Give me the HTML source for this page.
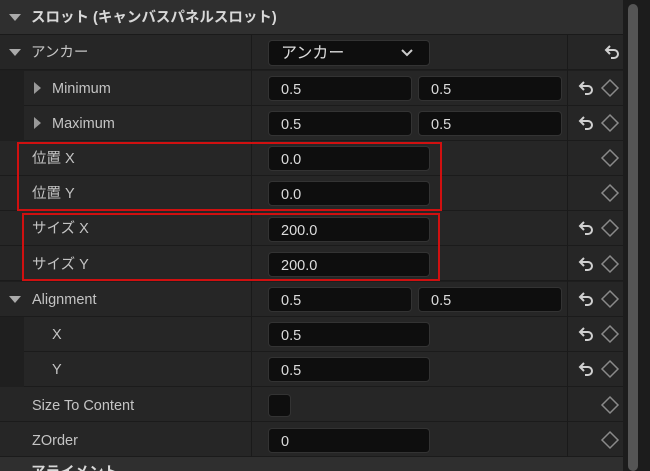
<!DOCTYPE html>
<html><head><meta charset="utf-8"><style>
*{margin:0;padding:0;box-sizing:border-box}
html,body{width:650px;height:471px;overflow:hidden}
body{background:#1e1e1e;font-family:"Liberation Sans","Noto Sans CJK JP",sans-serif;color:#c8c8c8;font-size:14px;position:relative}
.a{position:absolute}
.hdr{left:0;top:0;width:623px;height:35px;background:#2f2f2f;border-bottom:1px solid #1a1a1a}
.row{left:0;width:623px;height:35px;background:#262626;border-bottom:1px solid #1b1b1b}
.ind{left:0;width:24px;height:35px;background:#1f1f1f}
.lbl{font-size:14.5px;line-height:18px;color:#c4c4c4;white-space:nowrap}
.in{height:25px;background:#0e0e0e;border:1px solid #333;border-radius:4px;color:#ddd;font-size:14.5px;line-height:26px;padding:0 0 0 12px}
.vd{left:251px;width:1px;background:#1a1a1a;top:35px;height:422px}
.vd2{left:567px;width:1px;background:#1a1a1a;top:35px;height:422px}
.tri{width:0;height:0;border-left:6px solid transparent;border-right:6px solid transparent;border-top:7px solid #aaa}
.tr{width:0;height:0;border-top:6px solid transparent;border-bottom:6px solid transparent;border-left:7px solid #999}
.red{border:2px solid #d01010}
</style></head><body>
<div class="a hdr"></div>
<div class="a tri" style="left:9px;top:14px"></div>
<div class="a" style="left:31px;top:9px;font-size:14.5px;line-height:18px;font-weight:bold;color:#d8d8d8">スロット (キャンバスパネルスロット)</div>

<div class="a row" style="top:35px"></div>
<div class="a row" style="top:71px"></div><div class="a ind" style="top:71px"></div>
<div class="a row" style="top:106px"></div><div class="a ind" style="top:106px"></div>
<div class="a row" style="top:141px"></div>
<div class="a row" style="top:176px"></div>
<div class="a row" style="top:211px"></div>
<div class="a row" style="top:246px"></div>
<div class="a row" style="top:282px"></div>
<div class="a row" style="top:317px"></div><div class="a ind" style="top:317px"></div>
<div class="a row" style="top:352px"></div><div class="a ind" style="top:352px"></div>
<div class="a row" style="top:387px"></div>
<div class="a row" style="top:422px"></div>
<div class="a hdr" style="top:457px;height:20px"></div>
<div class="a" style="left:31px;top:464px;font-size:14.5px;line-height:18px;font-weight:bold;color:#d8d8d8">アライメント</div>
<div class="a vd"></div><div class="a vd2"></div>

<div class="a tri" style="left:9px;top:49px"></div>
<div class="a lbl" style="left:31px;top:44px">アンカー</div>
<div class="a tr" style="left:34px;top:82px"></div>
<div class="a lbl" style="left:52px;top:80px">Minimum</div>
<div class="a tr" style="left:34px;top:117px"></div>
<div class="a lbl" style="left:52px;top:115px">Maximum</div>
<div class="a lbl" style="left:32px;top:150px">位置 X</div>
<div class="a lbl" style="left:32px;top:185px">位置 Y</div>
<div class="a lbl" style="left:32px;top:220px">サイズ X</div>
<div class="a lbl" style="left:32px;top:256px">サイズ Y</div>
<div class="a tri" style="left:9px;top:296px"></div>
<div class="a lbl" style="left:32px;top:291px">Alignment</div>
<div class="a lbl" style="left:52px;top:326px">X</div>
<div class="a lbl" style="left:52px;top:361px">Y</div>
<div class="a lbl" style="left:32px;top:397px">Size To Content</div>
<div class="a lbl" style="left:32px;top:432px">ZOrder</div>

<div class="a in" style="left:268px;top:40px;width:162px;height:26px;font-size:16px;line-height:25px">アンカー
<svg class="a" style="left:132px;top:8px" width="12" height="8" viewBox="0 0 12 8"><path d="M1 1l5 5 5-5" stroke="#ccc" stroke-width="2" fill="none"/></svg></div>
<div class="a in" style="left:268px;top:76px;width:144px">0.5</div>
<div class="a in" style="left:418px;top:76px;width:144px">0.5</div>
<div class="a in" style="left:268px;top:111px;width:144px">0.5</div>
<div class="a in" style="left:418px;top:111px;width:144px">0.5</div>
<div class="a in" style="left:268px;top:146px;width:162px">0.0</div>
<div class="a in" style="left:268px;top:181px;width:162px">0.0</div>
<div class="a in" style="left:268px;top:217px;width:162px">200.0</div>
<div class="a in" style="left:268px;top:252px;width:162px">200.0</div>
<div class="a in" style="left:268px;top:287px;width:144px">0.5</div>
<div class="a in" style="left:418px;top:287px;width:144px">0.5</div>
<div class="a in" style="left:268px;top:322px;width:162px">0.5</div>
<div class="a in" style="left:268px;top:357px;width:162px">0.5</div>
<div class="a in" style="left:268px;top:394px;width:23px;height:23px"></div>
<div class="a in" style="left:268px;top:428px;width:162px">0</div>

<div class="a red" style="left:17px;top:142px;width:425px;height:69px"></div>
<div class="a red" style="left:22px;top:213px;width:418px;height:68px"></div>

<svg class="a" style="left:0;top:0" width="650" height="471">
<defs>
<g id="r"><path d="M-5 -3h7a4 4 0 0 1 0 8h-3" stroke="#d0d0d0" stroke-width="2" fill="none"/><path d="M-2 -7l-4 4 4 4" stroke="#d0d0d0" stroke-width="2" fill="none"/></g>
<g id="d"><path d="M0 -8l8 8-8 8-8-8z" stroke="#8a8a8a" stroke-width="1.5" fill="none"/></g>
</defs>
<use href="#r" x="612" y="53"/>
<use href="#r" x="586" y="89"/><use href="#d" x="610" y="88"/>
<use href="#r" x="586" y="124"/><use href="#d" x="610" y="123"/>
<use href="#d" x="610" y="158"/>
<use href="#d" x="610" y="193"/>
<use href="#r" x="586" y="229"/><use href="#d" x="610" y="228"/>
<use href="#r" x="586" y="265"/><use href="#d" x="610" y="264"/>
<use href="#r" x="586" y="300"/><use href="#d" x="610" y="299"/>
<use href="#r" x="586" y="335"/><use href="#d" x="610" y="334"/>
<use href="#r" x="586" y="370"/><use href="#d" x="610" y="369"/>
<use href="#d" x="610" y="405"/>
<use href="#d" x="610" y="440"/>
</svg>

<div class="a" style="left:623px;top:0;width:27px;height:471px;background:#1c1c1c"></div>
<div class="a" style="left:628px;top:4px;width:10px;height:467px;background:#555;border-radius:5px"></div>
</body></html>
